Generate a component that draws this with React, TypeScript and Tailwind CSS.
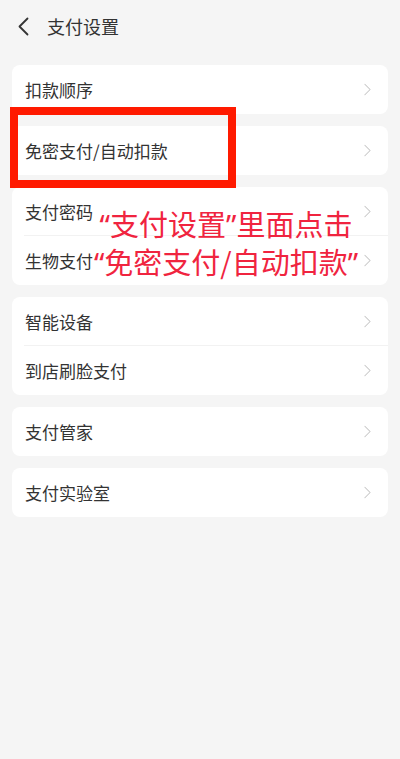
import { ChevronRight } from 'lucide-react'

const groups: string[][] = [
  ['扣款顺序'],
  ['免密支付/自动扣款'],
  ['支付密码', '生物支付'],
  ['智能设备', '到店刷脸支付'],
  ['支付管家'],
  ['支付实验室'],
]

function Row({ label, last }: { label: string; last: boolean }) {
  return (
    <div className="relative flex h-[49px] items-center justify-between pl-[13px] pr-[10px]">
      <span className="text-[17px] text-[#333333]">{label}</span>
      <ChevronRight className="h-[21px] w-[21px] text-[#c6c6c6]" strokeWidth={1.2} />
      {!last && <div className="absolute bottom-0 left-[12px] right-0 h-px bg-[#f2f2f2]" />}
    </div>
  )
}

function Q({ c }: { c: string }) {
  return <span style={{ fontFamily: '"Noto Sans", sans-serif' }}>{c}</span>
}

export default function App() {
  return (
    <div
      className="relative h-[759px] w-[400px] overflow-hidden bg-[#f5f5f5]"
      style={{ fontFamily: '"Noto Sans CJK SC", "Noto Sans", sans-serif' }}
    >
      <div className="flex h-[53px] items-center pl-[17px]">
        <svg width="12" height="19" viewBox="0 0 12 19" fill="none">
          <path d="M10.5 1.5 L2.5 9.5 L10.5 17.5" stroke="#333333" strokeWidth="1.8" strokeLinecap="round" strokeLinejoin="round" />
        </svg>
        <span className="ml-[18px] text-[18px] text-[#333333]">支付设置</span>
      </div>

      <div className="flex flex-col gap-3 px-3 pt-3">
        {groups.map((g, i) => (
          <div key={i} className="overflow-hidden rounded-lg bg-white">
            {g.map((label, j) => (
              <Row key={label} label={label} last={j === g.length - 1} />
            ))}
          </div>
        ))}
      </div>

      {/* annotation overlay */}
      <div className="absolute left-[10px] top-[107px] h-[81px] w-[226px] border-[8px] border-[#ff1a00]" />
      <div className="absolute left-[76px] top-[205px] w-[300px] text-center text-[29px] leading-[37px] text-[#f0243f]">
        <div>
          <Q c="“" />支付设置<Q c="”" />里面点击
        </div>
        <div>
          <Q c="“" />免密支付/自动扣款<Q c="”" />
        </div>
      </div>
    </div>
  )
}
